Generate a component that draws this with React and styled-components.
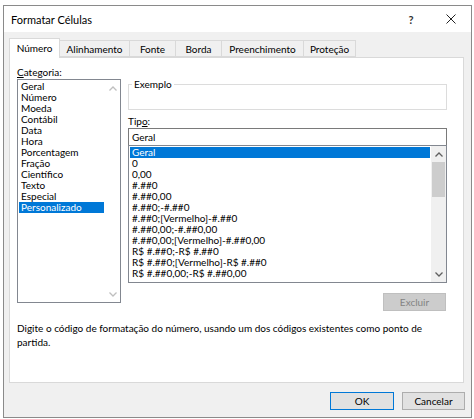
import React from 'react';
import styled, { createGlobalStyle } from 'styled-components';

const GlobalStyle = createGlobalStyle`
  html, body {
    margin: 0;
    padding: 0;
    background: #ffffff;
  }
  body {
    font-family: Lato, "Noto Sans", sans-serif;
    font-size: 10px;
    color: #000000;
  }
  * {
    box-sizing: border-box;
  }
`;

const Window = styled.div`
  margin: 5px 0 0 3px;
  width: 469px;
  height: 413px;
  border: 1px solid #8a8a8a;
  background: #f0f0f0;
  display: flex;
  flex-direction: column;
`;

const TitleBar = styled.div`
  height: 26px;
  flex: none;
  background: #ffffff;
  display: flex;
  align-items: center;
  padding-left: 7px;
  font-size: 11px;
`;

const TitleText = styled.div`
  flex: 1;
  margin-top: 1px;
`;

const TitleButton = styled.div`
  width: 40px;
  height: 26px;
  display: flex;
  align-items: center;
  justify-content: center;
  font-size: 11px;
  font-weight: 700;
  color: #333;
`;

const Body = styled.div`
  flex: 1;
  display: flex;
  flex-direction: column;
  padding: 6px 0 0 5px;
`;

const TabRow = styled.div`
  display: flex;
  align-items: flex-end;
  height: 19px;
  position: relative;
  z-index: 1;
`;

const Tab = styled.div`
  width: ${p => p.$w}px;
  height: ${p => (p.$active ? 20 : 17)}px;
  margin-bottom: ${p => (p.$active ? -1 : 0)}px;
  background: ${p => (p.$active ? '#ffffff' : '#f0f0f0')};
  border: 1px solid #d9d9d9;
  border-bottom: ${p => (p.$active ? 'none' : '1px solid #d9d9d9')};
  border-left: ${p => (p.$first || p.$active ? '1px solid #d9d9d9' : 'none')};
  display: flex;
  align-items: center;
  justify-content: center;
  padding-bottom: ${p => (p.$active ? 1 : 0)}px;
`;

const Panel = styled.div`
  width: 455px;
  height: 326px;
  background: #ffffff;
  border: 1px solid #d9d9d9;
  padding: 7px 16px 0 7px;
  display: flex;
  flex-direction: column;
`;

const Columns = styled.div`
  display: flex;
  gap: 7px;
`;

const LeftCol = styled.div`
  width: 104px;
  display: flex;
  flex-direction: column;
`;

const RightCol = styled.div`
  flex: 1;
  display: flex;
  flex-direction: column;
  padding-top: 18px;
`;

const Label = styled.div`
  height: 14px;
  line-height: 14px;
  margin-bottom: ${p => p.$mb || 0}px;
`;

const Key = styled.span`
  text-decoration: underline;
  text-underline-offset: 1px;
`;

const ListBox = styled.div`
  height: ${p => p.$h}px;
  border: 1px solid ${p => p.$border || '#828790'};
  background: #ffffff;
  display: flex;
  margin-top: ${p => p.$mt || 0}px;
`;

const Items = styled.div`
  flex: 1;
  padding: 1px;
  overflow: hidden;
`;

const Item = styled.div`
  height: 11px;
  line-height: 11px;
  padding-left: 2px;
  white-space: nowrap;
  background: ${p => (p.$sel ? '#0078d7' : 'transparent')};
  color: ${p => (p.$sel ? '#ffffff' : '#000000')};
`;

const ScrollBar = styled.div`
  width: 15px;
  background: ${p => (p.$disabled ? '#ffffff' : '#f0f0f0')};
  display: flex;
  flex-direction: column;
  justify-content: space-between;
`;

const Arrow = styled.div`
  height: 16px;
  display: flex;
  align-items: center;
  justify-content: center;
`;

const Track = styled.div`
  flex: 1;
  padding: 0 1px;
`;

const Thumb = styled.div`
  height: 35px;
  background: #cdcdcd;
`;

const Fieldset = styled.fieldset`
  margin: 0;
  padding: 0;
  height: 32px;
  border: 1px solid #dcdcdc;
  border-top: 1px solid #dcdcdc;
  margin-top: -5px;
`;

const Legend = styled.legend`
  padding: 0 2px;
  margin-left: 3px;
  line-height: 12px;
`;

const Input = styled.div`
  height: 18px;
  border: 1px solid #7a7a7a;
  background: #ffffff;
  padding-left: 3px;
  display: flex;
  align-items: center;
`;

const ButtonRow = styled.div`
  display: flex;
  justify-content: flex-end;
  gap: ${p => p.$gap || 0}px;
  margin-top: ${p => p.$mt || 0}px;
  padding-right: ${p => p.$pr || 0}px;
`;

const Button = styled.div`
  width: ${p => p.$w}px;
  height: 18px;
  display: flex;
  align-items: center;
  justify-content: center;
  background: ${p => (p.$disabled ? '#cccccc' : '#e1e1e1')};
  border: 1px solid ${p => (p.$focus ? '#0078d7' : p.$disabled ? '#bfbfbf' : '#adadad')};
  color: ${p => (p.$disabled ? '#838383' : '#000000')};
`;

const Description = styled.p`
  margin: 10px 0 0 0;
  line-height: 14px;
  width: 420px;
`;

const Footer = styled.div`
  display: flex;
  justify-content: flex-end;
  gap: 8px;
  padding: 9px 6px 0 0;
`;

const Chevron = ({ down, color }) => (
  <svg width="8" height="5" viewBox="0 0 8 5">
    <polyline
      points={down ? '0.5,0.5 4,4 7.5,0.5' : '0.5,4.5 4,1 7.5,4.5'}
      fill="none"
      stroke={color}
      strokeWidth="1.3"
    />
  </svg>
);

const CloseIcon = () => (
  <svg width="10" height="10" viewBox="0 0 10 10">
    <path d="M0.5 0.5 L9.5 9.5 M9.5 0.5 L0.5 9.5" stroke="#222" strokeWidth="1" />
  </svg>
);

const tabs = [
  { label: 'Número', w: 51 },
  { label: 'Alinhamento', w: 70 },
  { label: 'Fonte', w: 46 },
  { label: 'Borda', w: 46 },
  { label: 'Preenchimento', w: 82 },
  { label: 'Proteção', w: 52 },
];

const categories = [
  'Geral', 'Número', 'Moeda', 'Contábil', 'Data', 'Hora', 'Porcentagem',
  'Fração', 'Científico', 'Texto', 'Especial', 'Personalizado',
];

const formats = [
  'Geral',
  '0',
  '0,00',
  '#.##0',
  '#.##0,00',
  '#.##0;-#.##0',
  '#.##0;[Vermelho]-#.##0',
  '#.##0,00;-#.##0,00',
  '#.##0,00;[Vermelho]-#.##0,00',
  'R$ #.##0;-R$ #.##0',
  'R$ #.##0;[Vermelho]-R$ #.##0',
  'R$ #.##0,00;-R$ #.##0,00',
];

export default function App() {
  return (
    <>
      <GlobalStyle />
      <Window>
        <TitleBar>
          <TitleText>Formatar Células</TitleText>
          <TitleButton>?</TitleButton>
          <TitleButton>
            <CloseIcon />
          </TitleButton>
        </TitleBar>
        <Body>
          <TabRow>
            {tabs.map((t, i) => (
              <Tab key={t.label} $w={t.w} $active={i === 0} $first={i === 0}>
                {t.label}
              </Tab>
            ))}
          </TabRow>
          <Panel>
            <Columns>
              <LeftCol>
                <Label $mb={0}>
                  <Key>C</Key>ategoria:
                </Label>
                <ListBox $h={224} $mt={0}>
                  <Items>
                    {categories.map((c, i) => (
                      <Item key={c} $sel={i === categories.length - 1}>
                        {c}
                      </Item>
                    ))}
                  </Items>
                  <ScrollBar $disabled>
                    <Arrow>
                      <Chevron color="#bfbfbf" />
                    </Arrow>
                    <Arrow>
                      <Chevron down color="#bfbfbf" />
                    </Arrow>
                  </ScrollBar>
                </ListBox>
              </LeftCol>
              <RightCol>
                <Fieldset>
                  <Legend>Exemplo</Legend>
                </Fieldset>
                <Label $mb={0} style={{ marginTop: 4 }}>
                  Tip<Key>o</Key>:
                </Label>
                <Input>Geral</Input>
                <ListBox $h={138} $mt={-1}>
                  <Items>
                    {formats.map((f, i) => (
                      <Item key={f} $sel={i === 0}>
                        {f}
                      </Item>
                    ))}
                  </Items>
                  <ScrollBar>
                    <Arrow>
                      <Chevron color="#606060" />
                    </Arrow>
                    <Track>
                      <Thumb />
                    </Track>
                    <Arrow>
                      <Chevron down color="#606060" />
                    </Arrow>
                  </ScrollBar>
                </ListBox>
                <ButtonRow $mt={10} $pr={1}>
                  <Button $w={63} $disabled>
                    Excluir
                  </Button>
                </ButtonRow>
              </RightCol>
            </Columns>
            <Description>
              Digite o código de formatação do número, usando um dos códigos existentes como ponto de partida.
            </Description>
          </Panel>
          <Footer>
            <Button $w={64} $focus>
              OK
            </Button>
            <Button $w={63}>Cancelar</Button>
          </Footer>
        </Body>
      </Window>
    </>
  );
}
